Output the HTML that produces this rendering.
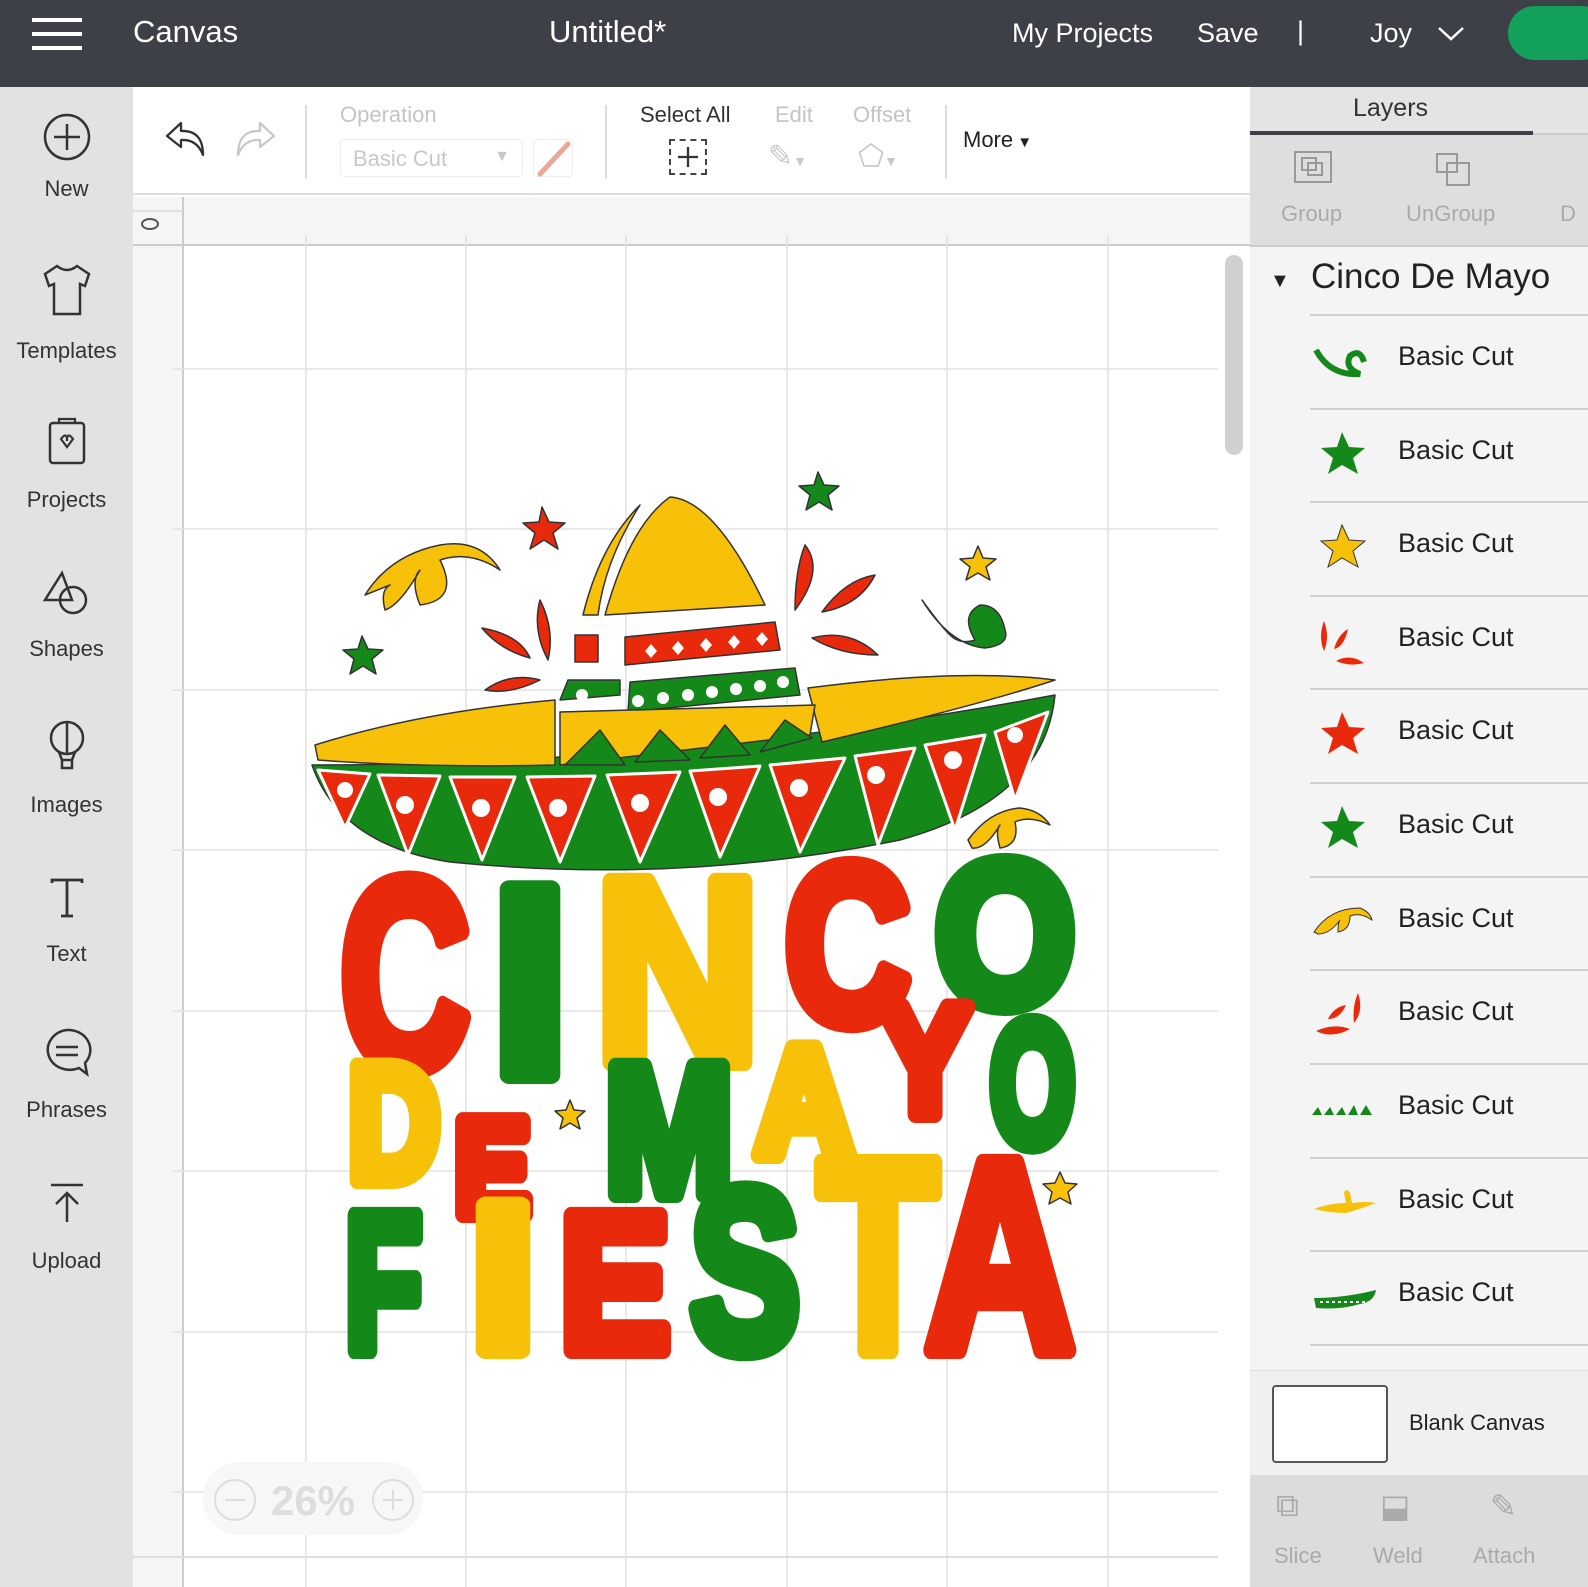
<!DOCTYPE html>
<html><head><meta charset="utf-8"><style>
*{margin:0;padding:0;box-sizing:border-box}
body{width:1588px;height:1587px;overflow:hidden;font-family:"Liberation Sans",sans-serif;background:#fff;position:relative}
.abs{position:absolute}
#top{left:0;top:0;width:1588px;height:87px;background:#3d4047;color:#fff}
#top span{position:absolute;top:14px;font-size:31px}
#side{left:0;top:87px;width:133px;height:1500px;background:#e2e2e2}
.si{position:absolute;left:0;width:133px;text-align:center;color:#333;font-size:22px}
.si svg{display:block;margin:0 auto 14px}
#tb{left:133px;top:87px;width:1117px;height:108px;background:#fff;border-bottom:2px solid #ddd}
.lbl{position:absolute;font-size:22px}
#right{left:1250px;top:87px;width:338px;height:1500px;background:#f4f4f4}
.row{position:absolute;left:60px;width:278px;height:94px;border-top:2px solid #cfcfcf}
.row span{position:absolute;left:88px;top:25px;font-size:27px;color:#222}
.row svg{position:absolute;left:0;top:20px}
.big text{paint-order:stroke;stroke-width:18px;stroke-linejoin:round}
</style></head><body>
<div id="top" class="abs">
 <div class="abs" style="left:32px;top:18px;width:50px;height:4px;background:#fff;box-shadow:0 14px 0 #fff,0 28px 0 #fff"></div>
 <span style="left:133px">Canvas</span>
 <span style="left:549px">Untitled*</span>
 <span style="left:1012px;font-size:27px;top:18px">My Projects</span>
 <span style="left:1197px;font-size:27px;top:18px">Save</span>
 <span style="left:1297px;font-size:27px;top:16px">|</span>
 <span style="left:1370px;font-size:27px;top:18px">Joy</span>
 <svg class="abs" style="left:1437px;top:26px" width="28" height="16"><path d="M2 2 L14 13 L26 2" stroke="#fff" stroke-width="2.5" fill="none"/></svg>
 <div class="abs" style="left:1508px;top:6px;width:100px;height:54px;border-radius:27px;background:#12a05a"></div>
</div>
<div id="side" class="abs">
 <div class="si" style="top:25px"><svg width="50" height="50"><circle cx="25" cy="25" r="22" stroke="#333" stroke-width="2.5" fill="none"/><path d="M25 12v26M12 25h26" stroke="#333" stroke-width="2.5"/></svg>New</div>
 <div class="si" style="top:175px"><svg width="54" height="62"><path d="M17 4 L5 12 L9 24 L14 22 L14 52 L40 52 L40 22 L45 24 L49 12 L37 4 Q27 12 17 4Z" stroke="#333" stroke-width="2.5" fill="none"/></svg>Templates</div>
 <div class="si" style="top:330px"><svg width="40" height="56"><rect x="3" y="6" width="34" height="40" rx="3" stroke="#333" stroke-width="2.5" fill="none"/><path d="M12 6V2h16v4M14 22q6-8 6 2q0-10 6-2l-6 8z" stroke="#333" stroke-width="2.2" fill="none"/></svg>Projects</div>
 <div class="si" style="top:483px"><svg width="50" height="52"><path d="M20 3 L3 30 L30 30Z" stroke="#333" stroke-width="2.5" fill="none"/><circle cx="31" cy="30" r="13" stroke="#333" stroke-width="2.5" fill="none"/></svg>Shapes</div>
 <div class="si" style="top:633px"><svg width="40" height="58"><ellipse cx="20" cy="18" rx="16" ry="16" stroke="#333" stroke-width="2.5" fill="none"/><path d="M20 2v32M12 32l3 8h10l3-8M15 40v8h10v-8" stroke="#333" stroke-width="2.5" fill="none"/></svg>Images</div>
 <div class="si" style="top:790px"><svg width="36" height="50"><path d="M3 6V3h30v3M18 3v36M12 39h12" stroke="#333" stroke-width="2.8" fill="none"/></svg>Text</div>
 <div class="si" style="top:940px"><svg width="50" height="56"><path d="M25 3a22 20 0 1 0 12 38l8 6-2-11A22 20 0 0 0 25 3z" stroke="#333" stroke-width="2.5" fill="none"/><path d="M14 20h22M14 28h22" stroke="#333" stroke-width="2.5"/></svg>Phrases</div>
 <div class="si" style="top:1095px"><svg width="40" height="52"><path d="M4 3h32M20 40V12M9 22l11-11 11 11" stroke="#333" stroke-width="2.5" fill="none"/></svg>Upload</div>
</div>
<div id="tb" class="abs">
 <svg class="abs" style="left:30px;top:32px" width="45" height="40"><path d="M18 4 L4 17 L18 28 V21 Q34 20 40 36 Q40 11 18 12Z" stroke="#333" stroke-width="2.3" fill="none" stroke-linejoin="round"/></svg>
 <svg class="abs" style="left:100px;top:32px" width="45" height="40"><path d="M27 4 L41 17 L27 28 V21 Q11 20 5 36 Q5 11 27 12Z" stroke="#c8c8c8" stroke-width="2.3" fill="none" stroke-linejoin="round"/></svg>
 <div class="abs" style="left:172px;top:18px;width:2px;height:74px;background:#ddd"></div>
 <div class="lbl" style="left:207px;top:15px;color:#c4c4c4">Operation</div>
 <div class="abs" style="left:207px;top:52px;width:183px;height:38px;border:1px solid #eee;border-radius:4px;color:#c8c8c8;font-size:22px;padding:6px 12px">Basic Cut<span style="position:absolute;right:12px;top:8px;font-size:16px">▼</span></div>
 <div class="abs" style="left:400px;top:52px;width:40px;height:38px;border:1px solid #eee;border-radius:4px"><svg width="40" height="38"><path d="M6 34 L34 4" stroke="#eba898" stroke-width="5" stroke-linecap="round"/></svg></div>
 <div class="abs" style="left:472px;top:18px;width:2px;height:74px;background:#ddd"></div>
 <div class="lbl" style="left:507px;top:15px;color:#333">Select All</div>
 <div class="abs" style="left:536px;top:52px;width:38px;height:36px;border:2px dashed #444"><svg width="34" height="32"><path d="M17 6v20M7 16h20" stroke="#333" stroke-width="2.3"/></svg></div>
 <div class="lbl" style="left:642px;top:15px;color:#c4c4c4">Edit</div>
 <div class="abs" style="left:635px;top:52px;color:#c8c8c8;font-size:30px">✎<span style="font-size:14px">▼</span></div>
 <div class="lbl" style="left:720px;top:15px;color:#c4c4c4">Offset</div>
 <div class="abs" style="left:725px;top:52px;color:#c8c8c8;font-size:30px">⬠<span style="font-size:14px">▼</span></div>
 <div class="abs" style="left:812px;top:18px;width:2px;height:74px;background:#ddd"></div>
 <div class="lbl" style="left:830px;top:40px;color:#222">More<span style="font-size:15px"> ▼</span></div>
</div>
<svg class="abs" style="left:133px;top:197px" width="1117" height="1390">
 <rect x="0" y="0" width="1117" height="1390" fill="#fff"/>
 <rect x="0" y="0" width="1117" height="48" fill="#f5f5f5"/>
 <rect x="0" y="0" width="50" height="1390" fill="#f5f5f5"/>
 <line x1="0" y1="48" x2="1117" y2="48" stroke="#ccc" stroke-width="2"/>
 <line x1="50" y1="0" x2="50" y2="1390" stroke="#ccc" stroke-width="2"/>
 <line x1="0" y1="14" x2="50" y2="14" stroke="#ccc"/>
 <ellipse cx="17" cy="27" rx="8" ry="5" stroke="#555" stroke-width="2" fill="none"/>
 <g stroke="#e2e2e2" stroke-width="1.5">
  <line x1="173" y1="38" x2="173" y2="1390"/><line x1="333" y1="38" x2="333" y2="1390"/><line x1="493" y1="38" x2="493" y2="1390"/><line x1="654" y1="38" x2="654" y2="1390"/><line x1="814" y1="38" x2="814" y2="1390"/><line x1="975" y1="38" x2="975" y2="1390"/>
  <line x1="40" y1="172" x2="1085" y2="172"/><line x1="40" y1="332" x2="1085" y2="332"/><line x1="40" y1="493" x2="1085" y2="493"/><line x1="40" y1="653" x2="1085" y2="653"/><line x1="40" y1="814" x2="1085" y2="814"/><line x1="40" y1="974" x2="1085" y2="974"/><line x1="40" y1="1135" x2="1085" y2="1135"/><line x1="40" y1="1295" x2="1085" y2="1295"/>
 </g>
 <line x1="0" y1="1360" x2="1085" y2="1360" stroke="#ddd" stroke-width="2"/>
 <rect x="1092" y="58" width="18" height="200" rx="9" fill="#d0d0d0"/>
 <rect x="70" y="1265" width="220" height="73" rx="36" fill="#f7f7f7"/>
 <circle cx="102" cy="1303" r="20" stroke="#ddd" stroke-width="2" fill="none"/><line x1="92" y1="1303" x2="112" y2="1303" stroke="#ddd" stroke-width="2"/>
 <circle cx="260" cy="1303" r="20" stroke="#ddd" stroke-width="2" fill="none"/><path d="M250 1303h20M260 1293v20" stroke="#ddd" stroke-width="2"/>
 <text x="180" y="1318" font-size="42" font-weight="bold" fill="#ddd" text-anchor="middle" font-family="Liberation Sans">26%</text>
</svg>
<svg class="abs" style="left:0;top:0" width="1250" height="1587">
<g stroke="#333" stroke-width="1.5" stroke-linejoin="round">
 <path d="M312 765 Q680 765 1055 695 Q1045 800 900 840 Q680 885 450 862 Q340 845 312 765Z" fill="#14891a"/>
 <g fill="#e8290c" stroke="#fff" stroke-width="3">
  <path d="M318 770 L370 774 L345 828Z"/><path d="M378 775 L440 776 L408 855Z"/><path d="M450 777 L515 777 L482 860Z"/><path d="M527 777 L595 776 L560 862Z"/><path d="M607 775 L680 772 L640 862Z"/><path d="M690 771 L760 766 L720 857Z"/><path d="M770 765 L845 758 L800 852Z"/><path d="M855 756 L915 748 L878 845Z"/><path d="M925 745 L985 735 L955 830Z"/><path d="M995 732 L1048 712 L1015 800Z"/>
 </g>
 <g fill="#fff" stroke="none"><circle cx="345" cy="790" r="8"/><circle cx="405" cy="805" r="9"/><circle cx="481" cy="808" r="9"/><circle cx="558" cy="808" r="9"/><circle cx="640" cy="803" r="9"/><circle cx="718" cy="797" r="9"/><circle cx="799" cy="788" r="9"/><circle cx="876" cy="775" r="9"/><circle cx="953" cy="760" r="9"/><circle cx="1015" cy="735" r="8"/></g>
 <path d="M315 745 Q420 712 555 700 L555 765 Q420 768 318 760Z" fill="#f7c10a"/>
 <path d="M808 688 Q960 668 1055 680 Q980 705 822 742Z" fill="#f7c10a"/>
 <path d="M605 615 Q630 525 670 497 Q715 500 765 605Z" fill="#f7c10a"/>
 <path d="M583 615 Q600 545 640 505 Q605 560 598 615Z" fill="#f7c10a"/>
 <path d="M575 635 L598 635 L598 662 L575 662Z" fill="#e8290c"/>
 <path d="M625 637 L775 622 L780 650 L625 665Z" fill="#e8290c"/>
 <path d="M568 680 L620 680 L620 695 L560 700Z M630 682 L795 668 L800 695 L628 712Z" fill="#14891a"/>
 <path d="M560 712 L815 705 L810 735 L560 765Z" fill="#f7c10a"/>
 <path d="M565 765 L600 730 L625 765Z M635 762 L660 730 L690 760Z M700 758 L725 725 L750 755Z M760 752 L785 720 L812 738Z" fill="#14891a"/>
 <g fill="#fff" stroke="none"><path d="M645 651l6-7 6 7-6 7z M672 648l6-7 6 7-6 7z M700 645l6-7 6 7-6 7z M728 642l6-7 6 7-6 7z M756 639l6-7 6 7-6 7z"/><circle cx="582" cy="695" r="6"/><circle cx="638" cy="701" r="6"/><circle cx="663" cy="698" r="6"/><circle cx="688" cy="695" r="6"/><circle cx="712" cy="692" r="6"/><circle cx="736" cy="689" r="6"/><circle cx="760" cy="686" r="6"/><circle cx="783" cy="682" r="6"/></g>
 <g fill="#e8290c"><path d="M540 600 Q555 630 548 660 Q532 630 540 600Z"/><path d="M482 628 Q520 635 530 658 Q500 650 482 628Z"/><path d="M485 690 Q510 672 540 680 Q510 695 485 690Z"/><path d="M805 545 Q825 570 795 610 Q795 570 805 545Z"/><path d="M875 575 Q860 605 822 612 Q845 580 875 575Z"/><path d="M812 638 Q850 628 878 655 Q840 655 812 638Z"/></g>
 <path d="M542 507l7 15 16 1-12 10 5 16-14-9-14 9 5-16-12-10 16-1z" fill="#e8290c"/>
 <path d="M818 472l6 13 15 1-11 9 4 15-13-8-13 8 4-15-11-9 15-1z" fill="#14891a"/>
 <path d="M362 636l6 13 15 1-11 9 4 15-13-8-13 8 4-15-11-9 15-1z" fill="#14891a"/>
 <path d="M978 546l5 12 13 1-10 8 4 13-12-7-12 7 4-13-10-8 13-1z" fill="#f7c10a"/>
 <path d="M570 1100l4 10 11 1-8 7 3 11-10-6-10 6 3-11-8-7 11-1z" fill="#f7c10a"/>
 <path d="M1060 1172l5 11 12 1-9 8 3 12-11-6-11 6 3-12-9-8 12-1z" fill="#f7c10a"/>
 <path d="M365 595 Q390 555 440 545 Q480 538 500 570 Q470 550 440 560 Q460 600 420 605 Q410 580 420 570 Q400 605 385 610 Q380 590 390 585Z" fill="#f7c10a"/>
 <path d="M968 840 Q990 810 1020 808 Q1040 810 1050 825 Q1030 815 1015 822 Q1020 845 1000 848 Q995 830 1000 825 Q985 850 972 848Z" fill="#f7c10a"/>
 <path d="M922 600 Q950 645 985 648 Q1010 645 1005 630 Q1000 605 980 605 Q960 615 975 640 Q960 645 950 635 Q940 625 922 600Z" fill="#14891a"/>
</g>
<g class="big" font-family="Liberation Sans" font-weight="bold">
 <text x="340" y="1068" font-size="270" textLength="130" lengthAdjust="spacingAndGlyphs" fill="#e8290c" stroke="#e8290c">C</text>
 <text x="490" y="1075" font-size="270" textLength="80" lengthAdjust="spacingAndGlyphs" fill="#14891a" stroke="#14891a">I</text>
 <text x="595" y="1062" font-size="262" textLength="165" lengthAdjust="spacingAndGlyphs" fill="#f7c10a" stroke="#f7c10a">N</text>
 <text x="785" y="1022" font-size="225" textLength="125" lengthAdjust="spacingAndGlyphs" fill="#e8290c" stroke="#e8290c">C</text>
 <text x="935" y="1005" font-size="205" textLength="140" lengthAdjust="spacingAndGlyphs" fill="#14891a" stroke="#14891a">O</text>
 <text x="348" y="1180" font-size="165" textLength="92" lengthAdjust="spacingAndGlyphs" fill="#f7c10a" stroke="#f7c10a">D</text>
 <text x="455" y="1214" font-size="135" textLength="75" lengthAdjust="spacingAndGlyphs" fill="#e8290c" stroke="#e8290c">E</text>
 <text x="605" y="1194" font-size="185" textLength="128" lengthAdjust="spacingAndGlyphs" fill="#14891a" stroke="#14891a">M</text>
 <text x="755" y="1155" font-size="155" textLength="98" lengthAdjust="spacingAndGlyphs" fill="#f7c10a" stroke="#f7c10a">A</text>
 <text x="880" y="1114" font-size="155" textLength="90" lengthAdjust="spacingAndGlyphs" fill="#e8290c" stroke="#e8290c">Y</text>
 <text x="990" y="1144" font-size="175" textLength="85" lengthAdjust="spacingAndGlyphs" fill="#14891a" stroke="#14891a">O</text>
 <text x="345" y="1350" font-size="195" textLength="77" lengthAdjust="spacingAndGlyphs" fill="#14891a" stroke="#14891a">F</text>
 <text x="470" y="1350" font-size="210" textLength="66" lengthAdjust="spacingAndGlyphs" fill="#f7c10a" stroke="#f7c10a">I</text>
 <text x="560" y="1350" font-size="195" textLength="110" lengthAdjust="spacingAndGlyphs" fill="#e8290c" stroke="#e8290c">E</text>
 <text x="690" y="1350" font-size="230" textLength="110" lengthAdjust="spacingAndGlyphs" fill="#14891a" stroke="#14891a">S</text>
 <text x="818" y="1350" font-size="272" textLength="120" lengthAdjust="spacingAndGlyphs" fill="#f7c10a" stroke="#f7c10a">T</text>
 <text x="925" y="1350" font-size="272" textLength="150" lengthAdjust="spacingAndGlyphs" fill="#e8290c" stroke="#e8290c">A</text>
</g>
</svg>
<div id="right" class="abs">
 <div class="abs" style="left:0;top:0;width:338px;height:48px;background:#e4e4e4;border-bottom:2px solid #ccc"></div>
 <div class="abs" style="left:0;top:44px;width:283px;height:4px;background:#3d4047"></div>
 <div class="abs" style="left:103px;top:7px;font-size:25px;color:#333">Layers</div>
 <div class="abs" style="left:0;top:48px;width:338px;height:112px;background:#dedede;border-bottom:2px solid #ccc"></div>
 <svg class="abs" style="left:42px;top:62px" width="42" height="36"><rect x="3" y="3" width="36" height="30" stroke="#999" stroke-width="2" fill="none"/><rect x="10" y="9" width="14" height="12" stroke="#999" stroke-width="2" fill="none"/><rect x="16" y="14" width="14" height="12" stroke="#999" stroke-width="2" fill="none"/></svg>
 <svg class="abs" style="left:183px;top:64px" width="42" height="40"><rect x="4" y="3" width="20" height="18" stroke="#999" stroke-width="2" fill="none"/><rect x="14" y="12" width="22" height="22" stroke="#999" stroke-width="2" fill="none"/></svg>
 <div class="abs" style="left:31px;top:114px;font-size:22px;color:#aaa">Group</div>
 <div class="abs" style="left:156px;top:114px;font-size:22px;color:#aaa">UnGroup</div>
 <div class="abs" style="left:310px;top:114px;font-size:22px;color:#aaa">D</div>
 <div class="abs" style="left:20px;top:183px;font-size:20px;color:#222">▼</div>
 <div class="abs" style="left:61px;top:170px;font-size:35px;color:#222">Cinco De Mayo</div>
 <div class="row" style="top:227px"><svg width="64" height="50"><path d="M6 14 Q20 40 50 38 Q34 32 40 20 Q50 12 54 26" stroke="#14891a" stroke-width="6" fill="none"/></svg><span>Basic Cut</span></div>
 <div class="row" style="top:321px"><svg width="64" height="50"><path d="M32 2l7 15 16 1-12 10 5 16-16-9-14 9 5-16-12-10 16-1z" fill="#14891a"/></svg><span>Basic Cut</span></div>
 <div class="row" style="top:414px"><svg width="64" height="50"><path d="M32 2l7 15 16 1-12 10 5 16-16-9-14 9 5-16-12-10 16-1z" fill="#f7c10a" stroke="#333"/></svg><span>Basic Cut</span></div>
 <div class="row" style="top:508px"><svg width="64" height="54"><path d="M14 4 Q20 20 14 34 Q8 20 14 4Z M38 12 Q34 30 24 32 Q28 18 38 12Z M26 44 Q40 36 54 46 Q40 50 26 44Z" fill="#e8290c"/></svg><span>Basic Cut</span></div>
 <div class="row" style="top:601px"><svg width="64" height="50"><path d="M32 2l7 15 16 1-12 10 5 16-16-9-14 9 5-16-12-10 16-1z" fill="#e8290c"/></svg><span>Basic Cut</span></div>
 <div class="row" style="top:695px"><svg width="64" height="50"><path d="M32 2l7 15 16 1-12 10 5 16-16-9-14 9 5-16-12-10 16-1z" fill="#14891a"/></svg><span>Basic Cut</span></div>
 <div class="row" style="top:789px"><svg width="64" height="50"><path d="M4 34 Q20 10 50 10 Q60 14 62 22 Q50 14 40 18 Q40 32 28 34 Q28 24 30 22 Q20 36 8 36Z" fill="#f7c10a" stroke="#333"/></svg><span>Basic Cut</span></div>
 <div class="row" style="top:882px"><svg width="64" height="54"><path d="M48 2 Q54 20 44 32 Q42 16 48 2Z M36 14 Q30 28 18 28 Q24 16 36 14Z M6 40 Q24 32 40 38 Q22 48 6 40Z" fill="#e8290c"/></svg><span>Basic Cut</span></div>
 <div class="row" style="top:976px"><svg width="64" height="50"><path d="M2 30 L8 22 L12 30Z M14 30 L20 22 L24 30Z M26 30 L32 22 L36 30Z M38 30 L44 20 L48 30Z M50 30 L56 20 L62 30Z" fill="#14891a"/></svg><span>Basic Cut</span></div>
 <div class="row" style="top:1070px"><svg width="68" height="50"><path d="M4 30 Q20 24 36 24 L34 14 Q36 8 40 14 L42 24 Q56 22 66 24 Q50 30 36 34 Q20 34 4 30Z" fill="#f7c10a"/></svg><span>Basic Cut</span></div>
 <div class="row" style="top:1163px"><svg width="68" height="50"><path d="M4 26 Q34 26 66 18 Q64 30 50 32 Q30 38 6 36Z" fill="#14891a"/><path d="M10 30h50" stroke="#fff" stroke-width="2" stroke-dasharray="3 3"/></svg><span>Basic Cut</span></div>
 <div class="abs" style="left:60px;top:1257px;width:278px;border-top:2px solid #cfcfcf"></div>
 <div class="abs" style="left:0;top:1283px;width:338px;height:105px;background:#f0f0f0;border-top:1px solid #ddd"></div>
 <div class="abs" style="left:22px;top:1298px;width:116px;height:78px;background:#fff;border:2px solid #555;border-radius:4px"></div>
 <div class="abs" style="left:159px;top:1323px;font-size:22px;color:#222">Blank Canvas</div>
 <div class="abs" style="left:0;top:1388px;width:338px;height:112px;background:#dcdcdc"></div>
 <div class="abs" style="left:26px;top:1400px;font-size:32px;color:#aaa">⧉</div>
 <div class="abs" style="left:130px;top:1400px;font-size:32px;color:#aaa">⬓</div>
 <div class="abs" style="left:240px;top:1400px;font-size:32px;color:#aaa">✎</div>
 <div class="abs" style="left:24px;top:1456px;font-size:22px;color:#aaa">Slice</div>
 <div class="abs" style="left:123px;top:1456px;font-size:22px;color:#aaa">Weld</div>
 <div class="abs" style="left:223px;top:1456px;font-size:22px;color:#aaa">Attach</div>
</div>
</body></html>
